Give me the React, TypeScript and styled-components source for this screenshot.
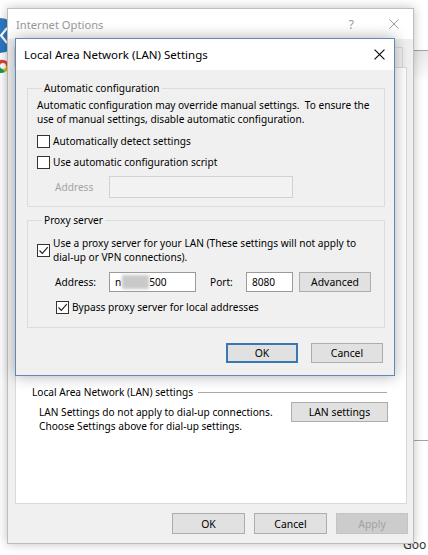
import React from "react";
import styled, { createGlobalStyle } from "styled-components";

const GlobalStyle = createGlobalStyle`
  html, body { margin: 0; padding: 0; background: #fff; }
  body {
    font-family: "Noto Sans", "Open Sans", sans-serif;
    font-size: 10.15px;
    color: #000;
  }
  * { box-sizing: border-box; }
`;

const Desktop = styled.div`
  position: relative;
  width: 428px;
  height: 555px;
  overflow: hidden;
  background: #fff;
`;

/* ---------- background web page pieces ---------- */
const PageIcon = styled.svg`
  position: absolute;
  left: 0;
  top: 14px;
`;

const PageRule = styled.div<{ $top: number; $shade?: boolean }>`
  position: absolute;
  left: 410px;
  right: 0;
  top: ${(p) => p.$top}px;
  height: ${(p) => (p.$shade ? 32 : 1)}px;
  border-top: 1px solid #a4a4a4;
  background: ${(p) =>
    p.$shade ? "linear-gradient(#e9e9e9, #f7f7f7 70%, #fff)" : "transparent"};
`;

const PageText = styled.div`
  position: absolute;
  left: 403px;
  top: 537px;
  font-size: 12px;
  color: #333;
  line-height: 15px;
`;

/* ---------- window chrome ---------- */
const Window = styled.div`
  position: absolute;
  left: 7px;
  top: 8px;
  width: 407px;
  height: 536px;
  display: flex;
  flex-direction: column;
  background: #f0f0f0;
  border: 1px solid #bdbdbd;
  box-shadow: 0 0 10px rgba(0, 0, 0, 0.25);
`;

const WindowTitleBar = styled.div`
  height: 30px;
  flex: none;
  display: flex;
  align-items: center;
  padding-left: 8px;
  background: #fff;
  color: #9a9a9a;
  font-size: 11.2px;
`;

const TitleControls = styled.div`
  margin-left: auto;
  display: flex;
  align-items: center;
  gap: 35px;
  padding-right: 14px;
`;

const HelpGlyph = styled.span`
  font-size: 12px;
  color: #9a9a9a;
`;

const TabStrip = styled.div`
  height: 28px;
  flex: none;
  display: flex;
  align-items: flex-end;
  padding: 0 10px 0 7px;
`;

const Tab = styled.div<{ $active?: boolean }>`
  flex: 1;
  height: ${(p) => (p.$active ? 22 : 20)}px;
  background: ${(p) => (p.$active ? "#fff" : "#f0f0f0")};
  border: 1px solid #d9d9d9;
  border-bottom: none;
  margin-left: -1px;
`;

const TabPanel = styled.div`
  flex: 1;
  margin: 0 6px 0 7px;
  background: #fff;
  border: 1px solid #d9d9d9;
  padding: 317px 19px 0 16px;
  display: flex;
  flex-direction: column;
`;

const GroupHeader = styled.div`
  display: flex;
  align-items: center;
  gap: 5px;
  line-height: 14px;
  white-space: nowrap;
`;

const GroupLine = styled.div`
  flex: 1;
  height: 1px;
  background: #a9a9a9;
`;

const LanBody = styled.div`
  margin-top: 3px;
  display: flex;
  justify-content: space-between;
  align-items: flex-start;
  padding-left: 7px;
  margin-right: -1px;
`;

const Paragraph = styled.div<{ $top?: number }>`
  line-height: 14px;
  white-space: nowrap;
  margin-top: ${(p) => p.$top ?? 0}px;
`;

const Footer = styled.div`
  flex: none;
  display: flex;
  justify-content: flex-end;
  gap: 9px;
  padding: 9px 5px 9px 0;
`;

const Button = styled.button<{ $w: number; $h?: number; $default?: boolean; $gap?: number }>`
  width: ${(p) => p.$w}px;
  height: ${(p) => p.$h ?? 20}px;
  flex: none;
  margin: 0 0 0 ${(p) => p.$gap ?? 0}px;
  padding: 0;
  font: inherit;
  font-size: 10.4px;
  color: #000;
  background: #e1e1e1;
  border: ${(p) => (p.$default ? "2px solid #3a78b4" : "1px solid #adadad")};
  display: flex;
  align-items: center;
  justify-content: center;
  &:disabled {
    color: #a2a2a2;
    background: #cccccc;
    border-color: #c4c4c4;
  }
`;

/* ---------- LAN dialog ---------- */
const Dialog = styled.div`
  position: absolute;
  left: 15px;
  top: 38px;
  width: 380px;
  display: flex;
  flex-direction: column;
  border: 1px solid #5d8abb;
  box-shadow: 0 0 14px rgba(0, 0, 0, 0.32);
  background: #f0f0f0;
`;

const DialogTitleBar = styled.div`
  height: 31px;
  display: flex;
  align-items: center;
  padding: 0 9px 0 8px;
  background: #fff;
  font-size: 11.5px;
  justify-content: space-between;
`;

const DialogBody = styled.div`
  display: flex;
  flex-direction: column;
  padding: 11px 9px 12px 11px;
`;

const Group = styled.fieldset<{ $top?: number; $bottom: number }>`
  margin: ${(p) => p.$top ?? 0}px 0 0 0;
  padding: 0 8px ${(p) => p.$bottom}px 9px;
  min-width: 0;
  border: 1px solid #dcdcdc;
  display: flex;
  flex-direction: column;
`;

const Legend = styled.legend`
  padding: 0 2px;
  margin-left: 5px;
  line-height: 14px;
`;

const CheckRow = styled.label<{ $top: number; $indent?: number }>`
  display: flex;
  align-items: center;
  gap: 3px;
  margin-top: ${(p) => p.$top}px;
  padding-left: ${(p) => p.$indent ?? 0}px;
  line-height: 14px;
  white-space: nowrap;
`;

const Box = styled.span`
  width: 13px;
  height: 13px;
  flex: none;
  border: 1px solid #333;
  background: #fff;
  display: flex;
  align-items: center;
  justify-content: center;
`;

const FieldRow = styled.div<{ $top: number }>`
  display: flex;
  align-items: center;
  margin-top: ${(p) => p.$top}px;
  padding-left: 18px;
`;

const FieldLabel = styled.span<{ $w: number; $gap?: number; $muted?: boolean }>`
  width: ${(p) => p.$w}px;
  margin-left: ${(p) => p.$gap ?? 0}px;
  flex: none;
  color: ${(p) => (p.$muted ? "#a3a3a3" : "#000")};
`;

const TextBox = styled.div<{ $w: number; $h: number; $disabled?: boolean }>`
  width: ${(p) => p.$w}px;
  height: ${(p) => p.$h}px;
  flex: none;
  display: flex;
  align-items: center;
  padding-left: 5px;
  background: ${(p) => (p.$disabled ? "#f2f2f2" : "#fff")};
  border: 1px solid ${(p) => (p.$disabled ? "#d2d2d2" : "#9a9a9a")};
`;

const Redacted = styled.span`
  display: inline-block;
  width: 27px;
  height: 14px;
  margin: 0 0 0 1px;
  background: #c9c9c9;
  filter: blur(1.4px);
`;

const DialogButtons = styled.div`
  display: flex;
  justify-content: flex-end;
  gap: 13px;
  margin-top: 15px;
  padding-right: 2px;
`;

const Check = () => (
  <svg width="11" height="11" viewBox="0 0 11 11">
    <path d="M1.5 5.5 L4.3 8.4 L9.8 2.2" fill="none" stroke="#222" strokeWidth="1.2" />
  </svg>
);

const CloseIcon = ({ color, size }: { color: string; size: number }) => (
  <svg width={size} height={size} viewBox="0 0 10 10">
    <path d="M0.5 0.5 L9.5 9.5 M9.5 0.5 L0.5 9.5" stroke={color} strokeWidth="1" />
  </svg>
);

const Checkbox = ({ checked }: { checked?: boolean }) => <Box>{checked ? <Check /> : null}</Box>;

export default function App() {
  return (
    <>
      <GlobalStyle />
      <Desktop>
        <PageIcon width="10" height="62" viewBox="0 0 10 62">
          <path d="M0 4 A18 18 0 0 1 10 7 L10 36 A18 18 0 0 1 0 39 Z" fill="#2d79c4" />
          <path d="M7 14 L1 21.5 L7 29" fill="none" stroke="#fff" strokeWidth="2.2" />
          <path d="M0 46 A9 9 0 0 1 9 50 L9 52 L0 52 Z" fill="#db4437" />
          <path d="M0 52 L9 52 L9 55 A9 9 0 0 1 5 58 Z" fill="#f4b400" />
          <path d="M0 52 L5 58 A9 9 0 0 1 0 59 Z" fill="#0f9d58" />
          <circle cx="3" cy="52" r="3" fill="#fff" />
        </PageIcon>
        <PageRule $top={50} $shade />
        <PageRule $top={440} />
        <PageText>Goo</PageText>

        <Window>
          <WindowTitleBar>
            Internet Options
            <TitleControls>
              <HelpGlyph>?</HelpGlyph>
              <CloseIcon color="#9a9a9a" size={10} />
            </TitleControls>
          </WindowTitleBar>
          <TabStrip>
            <Tab />
            <Tab />
            <Tab />
            <Tab />
            <Tab $active />
            <Tab />
            <Tab />
          </TabStrip>
          <TabPanel>
            <GroupHeader>
              Local Area Network (LAN) settings
              <GroupLine />
            </GroupHeader>
            <LanBody>
              <div>
                <Paragraph $top={3}>LAN Settings do not apply to dial-up connections.</Paragraph>
                <Paragraph>Choose Settings above for dial-up settings.</Paragraph>
              </div>
              <Button $w={97}>LAN settings</Button>
            </LanBody>
          </TabPanel>
          <Footer>
            <Button $w={73} $h={21}>OK</Button>
            <Button $w={73} $h={21}>Cancel</Button>
            <Button $w={72} $h={21} disabled>Apply</Button>
          </Footer>
        </Window>

        <Dialog>
          <DialogTitleBar>
            Local Area Network (LAN) Settings
            <CloseIcon color="#000" size={11} />
          </DialogTitleBar>
          <DialogBody>
            <Group $bottom={8}>
              <Legend>Automatic configuration</Legend>
              <Paragraph $top={3}>
                Automatic configuration may override manual settings.&nbsp; To ensure the
                <br />
                use of manual settings, disable automatic configuration.
              </Paragraph>
              <CheckRow $top={8}>
                <Checkbox />
                Automatically detect settings
              </CheckRow>
              <CheckRow $top={7}>
                <Checkbox />
                Use automatic configuration script
              </CheckRow>
              <FieldRow $top={7}>
                <FieldLabel $w={54} $muted>Address</FieldLabel>
                <TextBox $w={184} $h={22} $disabled />
              </FieldRow>
            </Group>

            <Group $top={6} $bottom={13}>
              <Legend>Proxy server</Legend>
              <CheckRow $top={9}>
                <Checkbox checked />
                <span>
                  Use a proxy server for your LAN (These settings will not apply to
                  <br />
                  dial-up or VPN connections).
                </span>
              </CheckRow>
              <FieldRow $top={8}>
                <FieldLabel $w={54}>Address:</FieldLabel>
                <TextBox $w={87} $h={20}>
                  n<Redacted />500
                </TextBox>
                <FieldLabel $w={36} $gap={14}>Port:</FieldLabel>
                <TextBox $w={47} $h={20}>8080</TextBox>
                <Button $w={72} $gap={6}>Advanced</Button>
              </FieldRow>
              <CheckRow $top={8} $indent={19}>
                <Checkbox checked />
                Bypass proxy server for local addresses
              </CheckRow>
            </Group>

            <DialogButtons>
              <Button $w={72} $default>OK</Button>
              <Button $w={72}>Cancel</Button>
            </DialogButtons>
          </DialogBody>
        </Dialog>
      </Desktop>
    </>
  );
}
